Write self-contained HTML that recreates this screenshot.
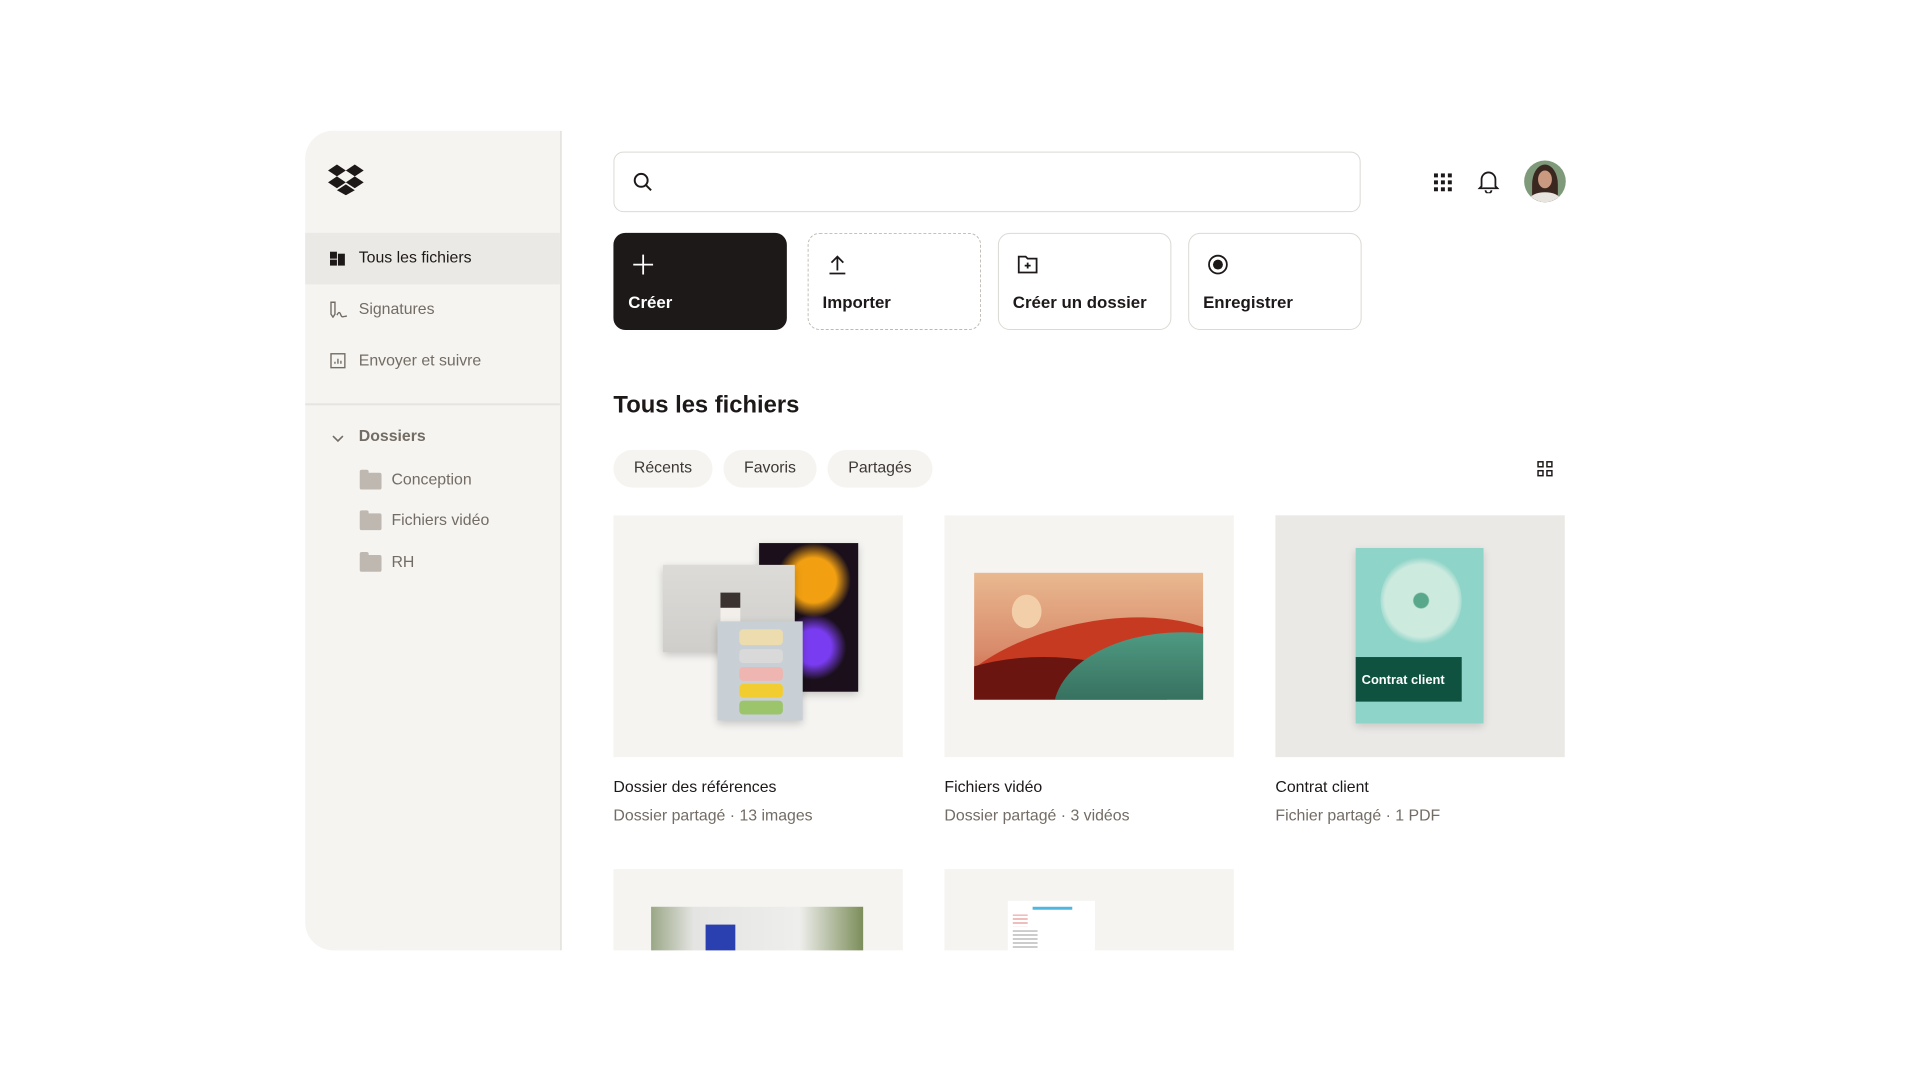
<!DOCTYPE html>
<html><head><meta charset="utf-8"><style>
*{box-sizing:border-box;margin:0;padding:0}
body{width:1920px;height:1080px;background:#fff;font-family:"Liberation Sans",sans-serif;color:#1e1919;position:relative;overflow:hidden}
#w{position:absolute;left:0;top:0;width:1920px;height:1080px;transform:scale(0.991);transform-origin:0 0}
.a{position:absolute}
.side{left:308px;top:132px;width:259px;height:827px;background:#f5f4f1;border-radius:28px 0 0 28px;border-right:2px solid #e6e4e0}
.nav{left:0;width:257px;height:52px;font-size:16px;color:#736c64;display:flex;align-items:center;padding-left:54px}
.fold{font-size:16px;color:#736c64;display:flex;align-items:center}
.fi{width:22px;height:17px;background:#bfb8b1;border-radius:2px;margin-right:10px;position:relative;top:0}
.fi:before{content:"";position:absolute;left:0;top:-3px;width:9px;height:4px;background:#bfb8b1;border-radius:2px 2px 0 0}
.btn{top:235px;width:175px;height:98px;border:1.5px solid #dcd9d4;border-radius:12px;background:#fff}
.btn span{position:absolute;left:14px;top:60px;font-size:17px;font-weight:bold;color:#1e1919}
.btn svg{position:absolute;left:18px;top:20px}
.chip{top:454px;height:38px;border-radius:19px;background:#f5f4f1;font-size:16px;color:#3d3833;display:flex;align-items:center;justify-content:center}
.card{top:520px;width:292px;height:244px;background:#f5f4f1;overflow:hidden}
.t1{font-size:16px;color:#1e1919}
.t2{font-size:16px;color:#736c64}
</style></head><body><div id="w">
<div class="a side">
  <svg class="a" style="left:23px;top:34px" width="36" height="31" viewBox="0 0 36 31"><path fill="#1e1919" d="M9 0 0 6l9 6 9-6zM27 0l-9 6 9 6 9-6zM0 18l9 6 9-6-9-6zM27 12l-9 6 9 6 9-6zM9 26l9 5 9-5-9-6z"/></svg>
  <div class="a nav" style="top:103px;background:#ebe9e6;color:#1e1919">Tous les fichiers</div>
  <div class="a" style="left:25px;top:122px;width:7px;height:7px;background:#1e1919"></div>
  <div class="a" style="left:25px;top:130px;width:7px;height:6px;background:#1e1919"></div>
  <div class="a" style="left:33px;top:124px;width:7px;height:12px;background:#1e1919"></div>
  <div class="a nav" style="top:155px">Signatures</div>
  <svg class="a" style="left:24px;top:171px" width="20" height="18" viewBox="0 0 20 18"><path d="M2 2h4v12l-2 3-2-3zM8 15c2-4 3-3 4 0s3 1 6 1" fill="none" stroke="#736c64" stroke-width="1.4"/></svg>
  <div class="a nav" style="top:207px">Envoyer et suivre</div>
  <svg class="a" style="left:25px;top:224px" width="16" height="16" viewBox="0 0 16 16"><rect x="1" y="1" width="14" height="14" fill="none" stroke="#736c64" stroke-width="1.4"/><path d="M5 11V9M8 11V6M11 11V8" stroke="#736c64" stroke-width="1.4"/></svg>
  <div class="a" style="left:0;top:275px;width:257px;height:2px;background:#e6e4e0"></div>
  <svg class="a" style="left:26px;top:306px" width="14" height="10" viewBox="0 0 14 10"><path d="M2 2l5 5 5-5" fill="none" stroke="#736c64" stroke-width="1.6"/></svg>
  <div class="a fold" style="left:54px;top:300px;font-weight:bold">Dossiers</div>
  <div class="a fold" style="left:55px;top:344px"><div class="fi"></div>Conception</div>
  <div class="a fold" style="left:55px;top:385px"><div class="fi"></div>Fichiers vidéo</div>
  <div class="a fold" style="left:55px;top:427px"><div class="fi"></div>RH</div>
</div>

<div class="a" style="left:619px;top:153px;width:754px;height:61px;border:1.5px solid #dcd9d4;border-radius:10px"></div>
<svg class="a" style="left:638px;top:173px" width="22" height="22" viewBox="0 0 22 22"><circle cx="9" cy="9" r="6.5" fill="none" stroke="#1e1919" stroke-width="2"/><path d="M14 14l5 5" stroke="#1e1919" stroke-width="2"/></svg>
<svg class="a" style="left:1446px;top:174px" width="20" height="20" viewBox="0 0 20 20" fill="#1e1919"><rect x="1" y="1" width="4" height="4"/><rect x="8" y="1" width="4" height="4"/><rect x="15" y="1" width="4" height="4"/><rect x="1" y="8" width="4" height="4"/><rect x="8" y="8" width="4" height="4"/><rect x="15" y="8" width="4" height="4"/><rect x="1" y="15" width="4" height="4"/><rect x="8" y="15" width="4" height="4"/><rect x="15" y="15" width="4" height="4"/></svg>
<svg class="a" style="left:1491px;top:171px" width="22" height="24" viewBox="0 0 22 24"><path d="M4 17V10a7 7 0 0 1 14 0v7l2 2H2zM8 21a3 3 0 0 0 6 0" fill="none" stroke="#1e1919" stroke-width="1.8"/></svg>
<div class="a" style="left:1538px;top:162px;width:42px;height:42px;border-radius:50%;overflow:hidden;background:#7f9a7a">
  <div class="a" style="left:8px;top:4px;width:26px;height:40px;border-radius:50% 50% 20% 20%;background:#3a2820"></div>
  <div class="a" style="left:14px;top:10px;width:14px;height:18px;border-radius:50%;background:#c99a80"></div>
  <div class="a" style="left:6px;top:32px;width:30px;height:14px;border-radius:50% 50% 0 0;background:#e8e4df"></div>
</div>

<div class="a btn" style="left:619px;background:#1e1919;border-color:#1e1919"><svg width="22" height="22" viewBox="0 0 22 22"><path d="M11 1v20M1 11h20" stroke="#fff" stroke-width="1.8"/></svg><span style="color:#fff">Créer</span></div>
<div class="a btn" style="left:815px;border-style:dashed;border-color:#bfb8b1"><svg width="22" height="22" viewBox="0 0 22 22"><path d="M11 17V3M5 9l6-6 6 6M3 20h16" fill="none" stroke="#1e1919" stroke-width="1.8"/></svg><span>Importer</span></div>
<div class="a btn" style="left:1007px"><svg width="22" height="22" viewBox="0 0 22 22"><path d="M2 3h7l2 2h9v14H2zM11 9v6M8 12h6" fill="none" stroke="#1e1919" stroke-width="1.8"/></svg><span>Créer un dossier</span></div>
<div class="a btn" style="left:1199px"><svg width="22" height="22" viewBox="0 0 22 22"><circle cx="11" cy="11" r="9" fill="none" stroke="#1e1919" stroke-width="1.8"/><circle cx="11" cy="11" r="5" fill="#1e1919"/></svg><span>Enregistrer</span></div>

<div class="a" style="left:619px;top:395px;font-size:24px;font-weight:bold">Tous les fichiers</div>
<div class="a chip" style="left:619px;width:100px">Récents</div>
<div class="a chip" style="left:730px;width:94px">Favoris</div>
<div class="a chip" style="left:835px;width:106px">Partagés</div>
<svg class="a" style="left:1551px;top:465px" width="16" height="16" viewBox="0 0 16 16" fill="none" stroke="#1e1919" stroke-width="1.5"><rect x="1" y="1" width="5" height="5"/><rect x="10" y="1" width="5" height="5"/><rect x="1" y="10" width="5" height="5"/><rect x="10" y="10" width="5" height="5"/></svg>

<div class="a card" style="left:619px">
  <div class="a" style="left:147px;top:28px;width:100px;height:150px;background:radial-gradient(circle at 55% 25%,#f2a012 0 18%,transparent 30%),radial-gradient(circle at 55% 70%,#7a3cf0 0 15%,transparent 28%),#1a0f1a;box-shadow:0 3px 8px rgba(0,0,0,.2)"></div>
  <div class="a" style="left:50px;top:50px;width:133px;height:88px;background:linear-gradient(#dcdbd8,#cfcecb);box-shadow:0 3px 8px rgba(0,0,0,.2)"><div class="a" style="left:58px;top:28px;width:20px;height:60px;background:linear-gradient(#3a3330 0 25%,#f2efea 26%)"></div></div>
  <div class="a" style="left:105px;top:107px;width:86px;height:100px;background:#c8d0d6;box-shadow:0 3px 8px rgba(0,0,0,.2)">
    <div class="a" style="left:22px;top:8px;width:44px;height:16px;background:#ecdcae;border-radius:4px"></div>
    <div class="a" style="left:22px;top:28px;width:44px;height:14px;background:#d9d9d9;border-radius:4px"></div>
    <div class="a" style="left:22px;top:46px;width:44px;height:14px;background:#efb5b0;border-radius:4px"></div>
    <div class="a" style="left:22px;top:63px;width:44px;height:14px;background:#f2cd31;border-radius:4px"></div>
    <div class="a" style="left:22px;top:80px;width:44px;height:14px;background:#9cc46a;border-radius:4px"></div>
  </div>
</div>
<div class="a card" style="left:953px">
  <div class="a" style="left:30px;top:58px;width:231px;height:128px;overflow:hidden;background:linear-gradient(180deg,#e9b990 0,#d98c6c 60%,#c95a3a 100%)">
    <div class="a" style="left:-40px;top:50px;width:320px;height:160px;border-radius:50%;background:#c73a22;transform:rotate(-12deg)"></div>
    <div class="a" style="left:-60px;top:85px;width:260px;height:120px;border-radius:50%;background:#6a1510"></div>
    <div class="a" style="left:80px;top:60px;width:260px;height:160px;border-radius:50%;background:linear-gradient(#4f9a82,#173a30)"></div>
    <div class="a" style="left:38px;top:22px;width:30px;height:34px;border-radius:50%;background:#f2cfa8"></div>
  </div>
</div>
<div class="a card" style="left:1287px;background:#ebe9e6">
  <div class="a" style="left:81px;top:33px;width:129px;height:177px;background:#8fd4c8;box-shadow:0 3px 8px rgba(0,0,0,.15)">
    <div class="a" style="left:25px;top:8px;width:82px;height:90px;border-radius:50%;background:radial-gradient(circle,#5aa88c 0 12%,#cdeadf 14% 60%,#8fd4c8 72%)"></div>
    <div class="a" style="left:0;top:110px;width:107px;height:45px;background:#0f5240;color:#fff;font-size:13px;font-weight:bold;display:flex;align-items:center;padding-left:6px">Contrat client</div>
  </div>
</div>

<div class="a t1" style="left:619px;top:786px">Dossier des références</div>
<div class="a t2" style="left:619px;top:815px">Dossier partagé · 13 images</div>
<div class="a t1" style="left:953px;top:786px">Fichiers vidéo</div>
<div class="a t2" style="left:953px;top:815px">Dossier partagé · 3 vidéos</div>
<div class="a t1" style="left:1287px;top:786px">Contrat client</div>
<div class="a t2" style="left:1287px;top:815px">Fichier partagé · 1 PDF</div>

<div class="a" style="left:619px;top:877px;width:292px;height:82px;background:#f5f4f1;overflow:hidden"><div class="a" style="left:38px;top:38px;width:214px;height:50px;background:linear-gradient(90deg,#9aa786 0,#e4e4e2 20%,#eeeeec 70%,#7c8e5a 100%)"><div class="a" style="left:55px;top:18px;width:30px;height:30px;background:#2a3fb0"></div></div></div>
<div class="a" style="left:953px;top:877px;width:292px;height:82px;background:#f5f4f1;overflow:hidden"><div class="a" style="left:64px;top:32px;width:88px;height:60px;background:#fff"><div class="a" style="left:25px;top:6px;width:40px;height:3px;background:#4fb6e0"></div><div class="a" style="left:5px;top:14px;width:15px;height:12px;background:repeating-linear-gradient(#e27b7b 0 1px,transparent 1px 4px)"></div><div class="a" style="left:5px;top:30px;width:25px;height:20px;background:repeating-linear-gradient(#999 0 1px,transparent 1px 4px)"></div></div></div>
</div></body></html>
